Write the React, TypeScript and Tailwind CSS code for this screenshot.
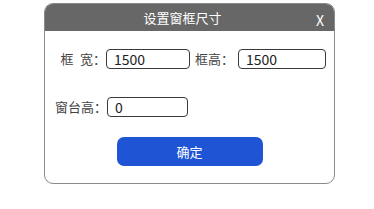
import React from "react";

const font = { fontFamily: '"Noto Sans CJK SC", "Noto Sans", sans-serif' };

function Input({ value, w }: { value: string; w: string }) {
  return (
    <div
      className={`${w} h-[20px] border-[1.5px] border-[#3a3a3a] rounded-[4px] flex items-center pl-[7px] text-[14px] text-[#222] leading-none`}
    >
      {value}
    </div>
  );
}

export default function App() {
  return (
    <div className="w-[374px] h-[209px] bg-white pt-[3px]" style={font}>
      <div className="ml-[44px] w-[291px] h-[181px] border border-[#8a8a8a] rounded-[9px] overflow-hidden bg-white flex flex-col">
        <div className="h-[27px] bg-[#676767] relative flex items-center justify-center text-white text-[13px]">
          <span className="ml-[-14px]">设置窗框尺寸</span>
          <span className="absolute right-[10px] top-[9px] text-[14px] leading-none">X</span>
        </div>
        <div className="pt-[18px] flex items-center">
          <div className="w-[61px] text-right text-[13px] text-[#444] whitespace-pre">框{"\u2002"}宽：</div>
          <Input value="1500" w="w-[84px]" />
          <div className="ml-[5px] w-[43px] text-[13px] text-[#444]">框高：</div>
          <Input value="1500" w="w-[88px]" />
        </div>
        <div className="mt-[28px] flex items-center">
          <div className="w-[62px] text-right text-[13px] text-[#444]">窗台高：</div>
          <Input value="0" w="w-[81px]" />
        </div>
        <div className="mt-[20px] flex justify-center">
          <div className="w-[146px] h-[29px] rounded-[7px] bg-[#1f55d5] text-white text-[13px] flex items-center justify-center">
            确定
          </div>
        </div>
      </div>
    </div>
  );
}
